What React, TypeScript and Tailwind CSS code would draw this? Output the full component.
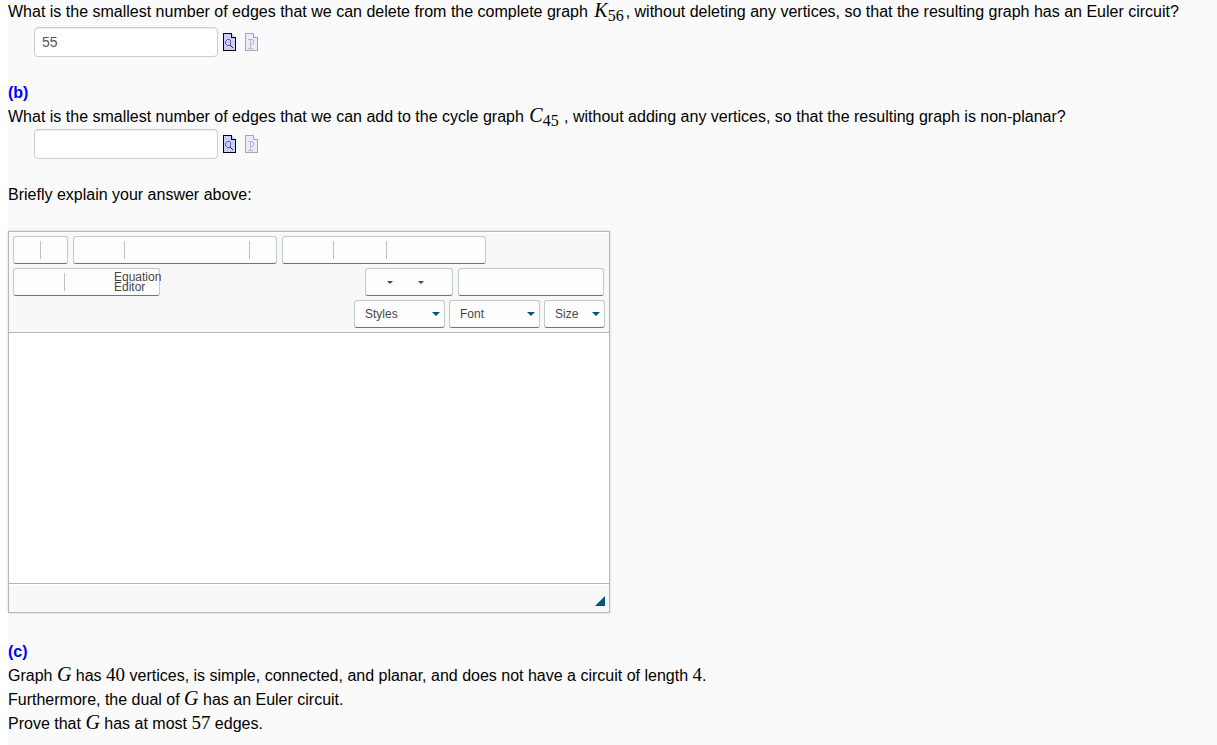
import { useState } from "react";
import type { ReactNode } from "react";

const mathFont = "font-['Liberation_Serif',serif] leading-none";

function Var({ name, sub, className = "" }: { name: string; sub?: string; className?: string }) {
  return (
    <span className={`${mathFont} ${className}`}>
      <i className="text-[20px]">{name}</i>
      {sub && <sub className="relative top-1 bottom-auto align-baseline text-base leading-none">{sub}</sub>}
    </span>
  );
}

function Num({ children }: { children: ReactNode }) {
  return <span className={`${mathFont} text-[19px]`}>{children}</span>;
}

function PreviewIcon() {
  return (
    <svg width="13" height="18" viewBox="0 0 13 18" shapeRendering="crispEdges" aria-hidden="true">
      <path d="M0.5 0.5H8.5L12.5 4.5V17.5H0.5Z" fill="#ccccff" stroke="#000" />
      <path d="M8.5 0.5V4.5H12.5" fill="#ccccff" stroke="#000" />
      <path d="M4 6.5H7M4 12.5H7M2.5 8V11M3 7.5H4M3 11.5H4M7.5 7V12" fill="none" stroke="#66668c" />
      <path d="M7 12.5H8M8 13.5H9M9 14.5H10" fill="none" stroke="#222244" />
    </svg>
  );
}

function PlotIcon() {
  return (
    <svg width="13" height="18" viewBox="0 0 13 18" shapeRendering="crispEdges" aria-hidden="true">
      <path d="M0.5 0.5H8.5L12.5 4.5V17.5H0.5Z" fill="#ebebff" stroke="#a6a6a6" />
      <path d="M8.5 0.5V4.5H12.5" fill="#ebebff" stroke="#a6a6a6" />
      <path d="M3 6.5H8M5.5 6V16M3 15.5H8M8.5 7V11M5 11.5H8" fill="none" stroke="#b8b8c8" />
    </svg>
  );
}

function AnswerBox({ label, initial }: { label: string; initial: string }) {
  const [value, setValue] = useState(initial);
  return (
    <div className="flex items-center pl-[26px]">
      <input
        type="text"
        aria-label={label}
        value={value}
        onChange={(e) => setValue(e.target.value)}
        className="h-[30px] w-[184px] rounded border border-[#ccc] bg-white px-[7px] text-sm text-[#555] shadow-[inset_0_1px_1px_rgba(0,0,0,0.075)]"
      />
      <button type="button" aria-label="Preview" className="ml-[5px]">
        <PreviewIcon />
      </button>
      <button type="button" aria-label="Plot" className="ml-[9px]">
        <PlotIcon />
      </button>
    </div>
  );
}

const groupBox =
  "flex h-7 items-center rounded-[3px] border border-[#bfcacc] border-b-[#5c7b8c] bg-[#fdfdfd]";

function Separator() {
  return <span className="h-[18px] w-px shrink-0 bg-[#c0c0c0]" />;
}

function Tools({ names, className }: { names: string[]; className: string }) {
  return (
    <span className={`flex h-full ${className}`}>
      {names.map((name) => (
        <button key={name} type="button" aria-label={name} className="h-full flex-1" />
      ))}
    </span>
  );
}

function DropTool({ name }: { name: string }) {
  return (
    <button type="button" aria-label={name} className="flex h-full w-[31px] items-center justify-end">
      <svg width="6" height="3" viewBox="0 0 6 3" aria-hidden="true">
        <path d="M0 0H6L3 3Z" fill="#474747" />
      </svg>
    </button>
  );
}

function Combo({ label, className }: { label: string; className: string }) {
  return (
    <span className={`relative ${groupBox} ${className}`}>
      <select
        aria-label={label}
        className="h-full w-full appearance-none bg-transparent px-[10px] text-xs text-[#474747]"
      >
        <option>{label}</option>
      </select>
      <svg
        width="8"
        height="4"
        viewBox="0 0 8 4"
        className="pointer-events-none absolute top-[11px] right-1"
        aria-hidden="true"
      >
        <path d="M0 0H8L4 4Z" fill="#005580" />
      </svg>
    </span>
  );
}

function Editor() {
  return (
    <div className="w-full max-w-[602px] border border-[#b6b6b6] bg-white shadow-[0_0_3px_rgba(0,0,0,0.15)]">
      <div className="flex flex-col gap-1 border-b border-[#b6b6b6] bg-[#f8f8f8] p-1 shadow-[inset_0_1px_0_#fff]">
        <div className="flex gap-[5px]">
          <div className={`${groupBox} w-[55px]`}>
            <Tools className="w-[26px]" names={["Source"]} />
            <Separator />
            <Tools className="flex-1" names={["Templates"]} />
          </div>
          <div className={`${groupBox} w-[204px]`}>
            <Tools className="w-[50px]" names={["Cut", "Copy"]} />
            <Separator />
            <Tools className="w-[124px]" names={["Paste", "Paste text", "Paste from Word", "Undo", "Redo"]} />
            <Separator />
            <Tools className="flex-1" names={["Find"]} />
          </div>
          <div className={`${groupBox} w-[204px]`}>
            <Tools className="w-[50px]" names={["Numbered list", "Bulleted list"]} />
            <Separator />
            <Tools className="w-[52px]" names={["Outdent", "Indent"]} />
            <Separator />
            <Tools className="flex-1" names={["Left", "Center", "Right", "Justify"]} />
          </div>
        </div>
        <div className="flex gap-[5px] pr-px">
          <div className={`${groupBox} mr-auto w-[147px]`}>
            <Tools className="w-[50px] shrink-0" names={["Image", "Table"]} />
            <Separator />
            <Tools className="w-[49px] shrink-0" names={["Line", "Symbol"]} />
            <button type="button" className="text-left text-xs leading-[10px] text-[#474747]">
              Equation
              <br />
              Editor
            </button>
          </div>
          <div className={`${groupBox} w-[88px]`}>
            <span className="flex h-full w-[27px]">
              <DropTool name="Text color" />
            </span>
            <DropTool name="Background color" />
          </div>
          <div className={`${groupBox} w-[146px]`}>
            <Tools
              className="flex-1"
              names={["Bold", "Italic", "Underline", "Subscript", "Superscript"]}
            />
          </div>
        </div>
        <div className="flex justify-end gap-1">
          <Combo label="Styles" className="w-[91px]" />
          <Combo label="Font" className="w-[91px]" />
          <Combo label="Size" className="w-[61px]" />
        </div>
      </div>
      <textarea
        aria-label="Explanation"
        className="block h-[250px] w-full resize-none bg-white p-3 text-sm outline-none"
      />
      <div className="flex h-[29px] items-end justify-end border-t border-[#b6b6b6] bg-[#f8f8f8] pr-1 pb-[6px] shadow-[inset_0_1px_0_#fff]">
        <svg width="10" height="10" viewBox="0 0 10 10" aria-hidden="true">
          <path d="M10 0V10H0Z" fill="#005580" />
        </svg>
      </div>
    </div>
  );
}

function PartLabel({ children }: { children: ReactNode }) {
  return <h2 className="leading-6 font-bold text-[#0000ff]">{children}</h2>;
}

export default function App() {
  return (
    <div className="min-h-screen bg-white pl-2">
      <main className="min-h-screen bg-[#fafafa] font-['Liberation_Sans',Arial,sans-serif] text-base text-black">
        <section>
          <p className="mb-[3px] leading-6">
            What is the smallest number of edges that we can delete from the complete graph{" "}
            <Var name="K" sub="56" className="mx-0.5" />, without deleting any vertices, so that the
            resulting graph has an Euler circuit?
          </p>
          <AnswerBox label="Answer to part a" initial="55" />
        </section>

        <section className="pt-6">
          <PartLabel>(b)</PartLabel>
          <p className="leading-6">
            What is the smallest number of edges that we can add to the cycle graph{" "}
            <Var name="C" sub="45" className="mx-px" /> , without adding any vertices, so that the
            resulting graph is non-planar?
          </p>
          <AnswerBox label="Answer to part b" initial="" />
          <p className="mt-6 mb-6 leading-6">Briefly explain your answer above:</p>
          <Editor />
        </section>

        <section className="pt-[27px]">
          <PartLabel>(c)</PartLabel>
          <p className="leading-6">
            Graph <Var name="G" /> has <Num>40</Num> vertices, is simple, connected, and planar, and
            does not have a circuit of length <Num>4</Num>.
          </p>
          <p className="leading-6">
            Furthermore, the dual of <Var name="G" /> has an Euler circuit.
          </p>
          <p className="leading-6">
            Prove that <Var name="G" /> has at most <Num>57</Num> edges.
          </p>
        </section>
      </main>
    </div>
  );
}
